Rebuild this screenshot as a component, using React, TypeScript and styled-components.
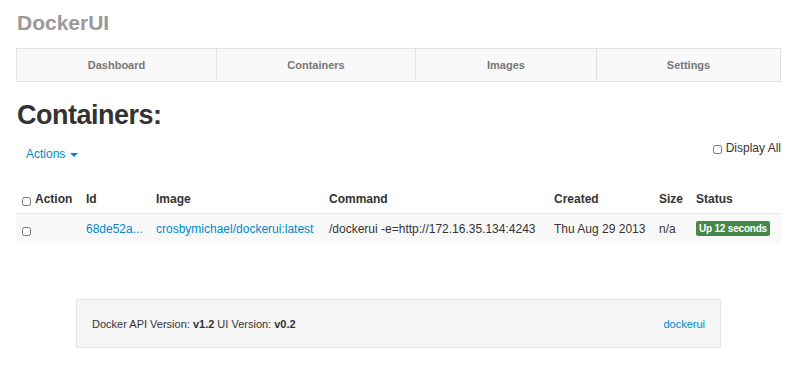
import React from "react";
import styled, { createGlobalStyle } from "styled-components";

const GlobalStyle = createGlobalStyle`
  body {
    margin: 0;
    background: #ffffff;
    font-family: "Liberation Sans", Arial, sans-serif;
    font-size: 12px;
    color: #333333;
  }
`;

const containers = [
  {
    id: "68de52a...",
    image: "crosbymichael/dockerui:latest",
    command: "/dockerui -e=http://172.16.35.134:4243",
    created: "Thu Aug 29 2013",
    size: "n/a",
    status: "Up 12 seconds",
  },
];

const navItems = ["Dashboard", "Containers", "Images", "Settings"];

const App = () => {
  return (
    <Page>
      <GlobalStyle />
      <Brand>DockerUI</Brand>
      <Nav>
        {navItems.map((item) => (
          <NavItem key={item}>{item}</NavItem>
        ))}
      </Nav>
      <Heading>Containers:</Heading>
      <Toolbar>
        <Actions>
          Actions <Caret />
        </Actions>
        <DisplayAll>
          <Check type="checkbox" />
          Display All
        </DisplayAll>
      </Toolbar>
      <Table>
        <colgroup>
          <col style={{ width: 64 }} />
          <col style={{ width: 70 }} />
          <col style={{ width: 173 }} />
          <col style={{ width: 225 }} />
          <col style={{ width: 105 }} />
          <col style={{ width: 37 }} />
          <col />
        </colgroup>
        <thead>
          <tr>
            <Th>
              <Check type="checkbox" />
              Action
            </Th>
            <Th>Id</Th>
            <Th>Image</Th>
            <Th>Command</Th>
            <Th>Created</Th>
            <Th>Size</Th>
            <Th>Status</Th>
          </tr>
        </thead>
        <tbody>
          {containers.map((c) => (
            <Row key={c.id}>
              <Td>
                <Check type="checkbox" />
              </Td>
              <Td>
                <Link>{c.id}</Link>
              </Td>
              <Td>
                <Link>{c.image}</Link>
              </Td>
              <Td>{c.command}</Td>
              <Td>{c.created}</Td>
              <Td>{c.size}</Td>
              <Td>
                <Badge>{c.status}</Badge>
              </Td>
            </Row>
          ))}
        </tbody>
      </Table>
      <Footer>
        <span>
          Docker API Version: <b>v1.2</b> UI Version: <b>v0.2</b>
        </span>
        <Link>dockerui</Link>
      </Footer>
    </Page>
  );
};

export default App;

const Page = styled.div`
  padding: 10px 19px 0 16px;
`;

const Brand = styled.div`
  font-size: 21px;
  font-weight: bold;
  color: #999999;
  line-height: 26px;
  padding-left: 1px;
`;

const Nav = styled.nav`
  display: grid;
  grid-template-columns: 199px 199px 181px 1fr;
  margin-top: 12px;
  border: 1px solid #e2e2e2;
  background: #f9f9f9;
  height: 32px;
`;

const NavItem = styled.div`
  display: flex;
  align-items: center;
  justify-content: center;
  font-size: 11px;
  font-weight: bold;
  color: #777777;
  border-left: 1px solid #e2e2e2;

  &:first-child {
    border-left: none;
  }
`;

const Heading = styled.h1`
  margin: 16px 0 0 1px;
  font-size: 27px;
  letter-spacing: -0.5px;
  line-height: 34px;
  font-weight: bold;
  color: #333333;
`;

const Toolbar = styled.div`
  display: flex;
  justify-content: space-between;
  align-items: flex-start;
  margin-top: 3px;
  height: 40px;
`;

const Actions = styled.div`
  display: flex;
  align-items: center;
  gap: 5px;
  color: #0088cc;
  padding: 12px 0 0 10px;
`;

const Caret = styled.span`
  display: inline-block;
  width: 0;
  height: 0;
  border-left: 4px solid transparent;
  border-right: 4px solid transparent;
  border-top: 4px solid #0088cc;
  margin-top: 1px;
`;

const DisplayAll = styled.label`
  display: flex;
  align-items: flex-start;
  color: #333333;
  padding-top: 6px;
`;

const Check = styled.input`
  width: 9px;
  height: 9px;
  margin: 4px 4px 0 0;
  vertical-align: middle;
`;

const Table = styled.table`
  width: 100%;
  border-collapse: collapse;
  table-layout: fixed;
  margin-top: 10px;
`;

const Th = styled.th`
  text-align: left;
  font-weight: bold;
  padding: 7px 6px 7px 6px;
  height: 14px;
  white-space: nowrap;
  vertical-align: middle;
`;

const Row = styled.tr`
  background: #f9f9f9;
  border-top: 1px solid #e6e6e6;
`;

const Td = styled.td`
  padding: 7px 6px;
  height: 15px;
  white-space: nowrap;
  vertical-align: middle;
`;

const Link = styled.a`
  color: #0088cc;
  text-decoration: none;
`;

const Badge = styled.span`
  display: inline-block;
  background: #468847;
  color: #ffffff;
  font-size: 10px;
  font-weight: bold;
  padding: 2px 3px;
  line-height: 11px;
  border-radius: 2px;
  letter-spacing: -0.2px;
`;

const Footer = styled.footer`
  display: flex;
  justify-content: space-between;
  align-items: center;
  margin: 56px 60px 0 60px;
  height: 47px;
  padding: 0 15px;
  background: #f5f5f5;
  border: 1px solid #e5e5e5;
  font-size: 11px;
`;
